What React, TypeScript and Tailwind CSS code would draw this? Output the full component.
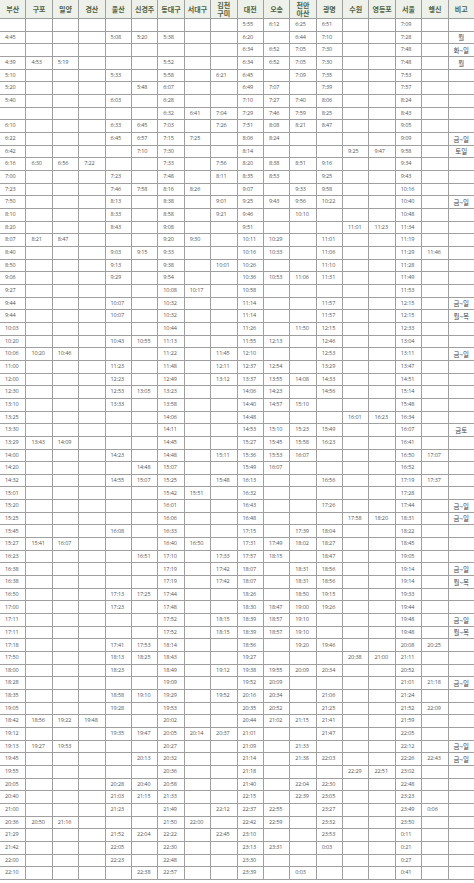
import React from "react";

const HEAD = ["부산", "구포", "밀양", "경산", "울산", "신경주", "동대구", "서대구", "김천\n구미", "대전", "오송", "천안\n아산", "광명", "수원", "영등포", "서울", "행신", "비고"];

const RAW: string[] = [
  "9=5:55 10=6:12 11=6:25 12=6:51 15=7:09",
  "0=4:45 4=5:08 5=5:20 6=5:38 9=6:20 11=6:44 12=7:10 15=7:28 17=월",
  "9=6:34 10=6:52 11=7:05 12=7:30 15=7:48 17=화~일",
  "0=4:39 1=4:53 2=5:19 6=5:52 9=6:34 10=6:52 11=7:05 12=7:30 15=7:48 17=월",
  "0=5:10 4=5:33 6=5:58 8=6:21 9=6:45 11=7:09 12=7:35 15=7:53",
  "0=5:20 5=5:48 6=6:07 9=6:49 10=7:07 12=7:39 15=7:57",
  "0=5:40 4=6:03 6=6:28 9=7:10 10=7:27 11=7:40 12=8:06 15=8:24",
  "6=6:32 7=6:41 8=7:04 9=7:29 10=7:46 11=7:59 12=8:25 15=8:43",
  "0=6:10 4=6:33 5=6:45 6=7:03 8=7:26 9=7:51 10=8:08 11=8:21 12=8:47 15=9:05",
  "0=6:22 4=6:45 5=6:57 6=7:15 7=7:25 9=8:06 10=8:24 15=9:09 17=금~일",
  "0=6:42 5=7:10 6=7:30 9=8:14 13=9:25 14=9:47 15=9:58 17=토일",
  "0=6:16 1=6:30 2=6:56 3=7:22 6=7:33 8=7:56 9=8:20 10=8:38 11=8:51 12=9:16 15=9:34",
  "0=7:00 4=7:23 6=7:48 8=8:11 9=8:35 10=8:53 12=9:25 15=9:43",
  "0=7:23 4=7:46 5=7:58 6=8:16 7=8:26 9=9:07 11=9:33 12=9:58 15=10:16",
  "0=7:50 4=8:13 6=8:38 8=9:01 9=9:25 10=9:43 11=9:56 12=10:22 15=10:40 17=금~일",
  "0=8:10 4=8:33 6=8:58 8=9:21 9=9:46 11=10:10 15=10:48",
  "0=8:20 4=8:43 6=9:08 9=9:51 13=11:01 14=11:23 15=11:34",
  "0=8:07 1=8:21 2=8:47 6=9:20 7=9:30 9=10:11 10=10:29 12=11:01 15=11:19",
  "0=8:40 4=9:03 5=9:15 6=9:33 9=10:16 10=10:33 12=11:06 15=11:29 16=11:46",
  "0=8:50 4=9:13 6=9:38 8=10:01 9=10:26 12=11:10 15=11:28",
  "0=9:06 4=9:29 6=9:54 9=10:36 10=10:53 11=11:06 12=11:31 15=11:49",
  "0=9:27 6=10:08 7=10:17 9=10:58 15=11:53",
  "0=9:44 4=10:07 6=10:32 9=11:14 12=11:57 15=12:15 17=금~일",
  "0=9:44 4=10:07 6=10:32 9=11:14 12=11:57 15=12:15 17=월~목",
  "0=10:03 6=10:44 9=11:26 11=11:50 12=12:15 15=12:33",
  "0=10:20 4=10:43 5=10:55 6=11:13 9=11:55 10=12:13 12=12:46 15=13:04",
  "0=10:06 1=10:20 2=10:46 6=11:22 8=11:45 9=12:10 12=12:53 15=13:11 17=금~일",
  "0=11:00 4=11:23 6=11:48 8=12:11 9=12:37 10=12:54 12=13:29 15=13:47",
  "0=12:00 4=12:23 6=12:49 8=13:12 9=13:37 10=13:55 11=14:08 12=14:33 15=14:51",
  "0=12:30 4=12:53 5=13:05 6=13:23 9=14:06 10=14:23 12=14:56 15=15:14",
  "0=13:10 4=13:33 6=13:58 9=14:40 10=14:57 11=15:10 15=15:48",
  "0=13:25 6=14:06 9=14:48 13=16:01 14=16:23 15=16:34",
  "0=13:30 6=14:11 9=14:53 10=15:10 11=15:23 12=15:49 15=16:07 17=금토",
  "0=13:29 1=13:43 2=14:09 6=14:45 9=15:27 10=15:45 11=15:58 12=16:23 15=16:41",
  "0=14:00 4=14:23 6=14:48 8=15:11 9=15:36 10=15:53 11=16:07 15=16:50 16=17:07",
  "0=14:20 5=14:48 6=15:07 9=15:49 10=16:07 15=16:52",
  "0=14:32 4=14:55 5=15:07 6=15:25 8=15:48 9=16:13 12=16:56 15=17:19 16=17:37",
  "0=15:01 6=15:42 7=15:51 9=16:32 15=17:28",
  "0=15:20 6=16:01 9=16:43 12=17:26 15=17:44 17=금~일",
  "0=15:25 6=16:06 9=16:48 13=17:58 14=18:20 15=18:31 17=금~일",
  "0=15:45 4=16:08 6=16:33 9=17:15 11=17:39 12=18:04 15=18:22",
  "0=15:27 1=15:41 2=16:07 6=16:40 7=16:50 9=17:31 10=17:49 11=18:02 12=18:27 15=18:45",
  "0=16:23 5=16:51 6=17:10 8=17:33 9=17:57 10=18:15 12=18:47 15=19:05",
  "0=16:38 6=17:19 8=17:42 9=18:07 11=18:31 12=18:56 15=19:14 17=금~일",
  "0=16:38 6=17:19 8=17:42 9=18:07 11=18:31 12=18:56 15=19:14 17=월~목",
  "0=16:50 4=17:13 5=17:25 6=17:44 9=18:26 11=18:50 12=19:15 15=19:33",
  "0=17:00 4=17:23 6=17:48 9=18:30 10=18:47 11=19:00 12=19:26 15=19:44",
  "0=17:11 6=17:52 8=18:15 9=18:39 10=18:57 11=19:10 15=19:48 17=금~일",
  "0=17:11 6=17:52 8=18:15 9=18:39 10=18:57 11=19:10 15=19:48 17=월~목",
  "0=17:18 4=17:41 5=17:53 6=18:14 9=18:56 11=19:20 12=19:46 15=20:08 16=20:25",
  "0=17:50 4=18:13 5=18:25 6=18:43 9=19:27 13=20:38 14=21:00 15=21:11",
  "0=18:00 4=18:23 6=18:49 8=19:12 9=19:38 10=19:55 11=20:09 12=20:34 15=20:52",
  "0=18:28 6=19:09 9=19:52 10=20:09 15=21:01 16=21:18 17=금~일",
  "0=18:35 4=18:58 5=19:10 6=19:29 8=19:52 9=20:16 10=20:34 12=21:06 15=21:24",
  "0=19:05 4=19:28 6=19:53 9=20:35 10=20:52 12=21:25 15=21:52 16=22:09",
  "0=18:42 1=18:56 2=19:22 3=19:48 6=20:02 9=20:44 10=21:02 11=21:15 12=21:41 15=21:59",
  "0=19:12 4=19:35 5=19:47 6=20:05 7=20:14 8=20:37 9=21:01 12=21:47 15=22:05",
  "0=19:13 1=19:27 2=19:53 6=20:27 9=21:09 11=21:33 15=22:12 17=금~일",
  "0=19:45 5=20:13 6=20:32 9=21:14 11=21:38 12=22:03 15=22:26 16=22:43 17=금~일",
  "0=19:55 6=20:36 9=21:18 13=22:29 14=22:51 15=23:02",
  "0=20:05 4=20:28 5=20:40 6=20:58 9=21:40 11=22:04 12=22:30 15=22:48",
  "0=20:40 4=21:03 5=21:15 6=21:33 9=22:15 11=22:39 12=23:05 15=23:23",
  "0=21:00 4=21:23 6=21:49 8=22:12 9=22:37 10=22:55 12=23:27 15=23:49 16=0:06",
  "0=20:36 1=20:50 2=21:16 6=21:50 7=22:00 9=22:42 10=22:59 12=23:32 15=23:50",
  "0=21:29 4=21:52 5=22:04 6=22:22 8=22:45 9=23:10 12=23:53 15=0:11",
  "0=21:42 4=22:05 6=22:30 9=23:13 10=23:31 12=0:03 15=0:21",
  "0=22:00 4=22:23 6=22:48 9=23:30 15=0:27",
  "0=22:10 5=22:38 6=22:57 9=23:39 11=0:03 15=0:41",
];

function parse(s: string): string[] {
  const out = new Array(18).fill("");
  s.split(" ").forEach((p) => {
    const i = p.indexOf("=");
    out[Number(p.slice(0, i))] = p.slice(i + 1);
  });
  return out;
}

const ROWS = RAW.map(parse);

export default function App() {
  return (
    <div className="w-[474px] h-[883px] bg-white overflow-hidden">
      <div className="grid h-[880px] gap-px bg-[#a0a0a0] pb-px grid-cols-[repeat(18,minmax(0,1fr))] grid-rows-[18px_repeat(68,minmax(0,1fr))] font-['Open_Sans','Noto_Sans_CJK_KR',sans-serif]">
        {HEAD.map((h, i) => (
          <div
            key={"h" + i}
            className="bg-[#eef0ea] flex items-center justify-center text-center whitespace-pre-line leading-[8px] text-[7px] font-bold text-[#506241] font-['Noto_Sans_CJK_KR',sans-serif]"
          >
            {h}
          </div>
        ))}
        {ROWS.map((r, ri) =>
          r.map((c, ci) =>
            ci === 17 ? (
              <div
                key={ri + "-" + ci}
                className="bg-white flex items-center justify-center text-[6.5px] leading-none text-[#444] font-['Noto_Sans_CJK_KR',sans-serif]"
              >
                {c}
              </div>
            ) : (
              <div
                key={ri + "-" + ci}
                className="bg-white flex items-center pl-[5px] text-[5.5px] leading-none text-[#555] tracking-[-0.1px]"
              >
                {c}
              </div>
            )
          )
        )}
      </div>
    </div>
  );
}
